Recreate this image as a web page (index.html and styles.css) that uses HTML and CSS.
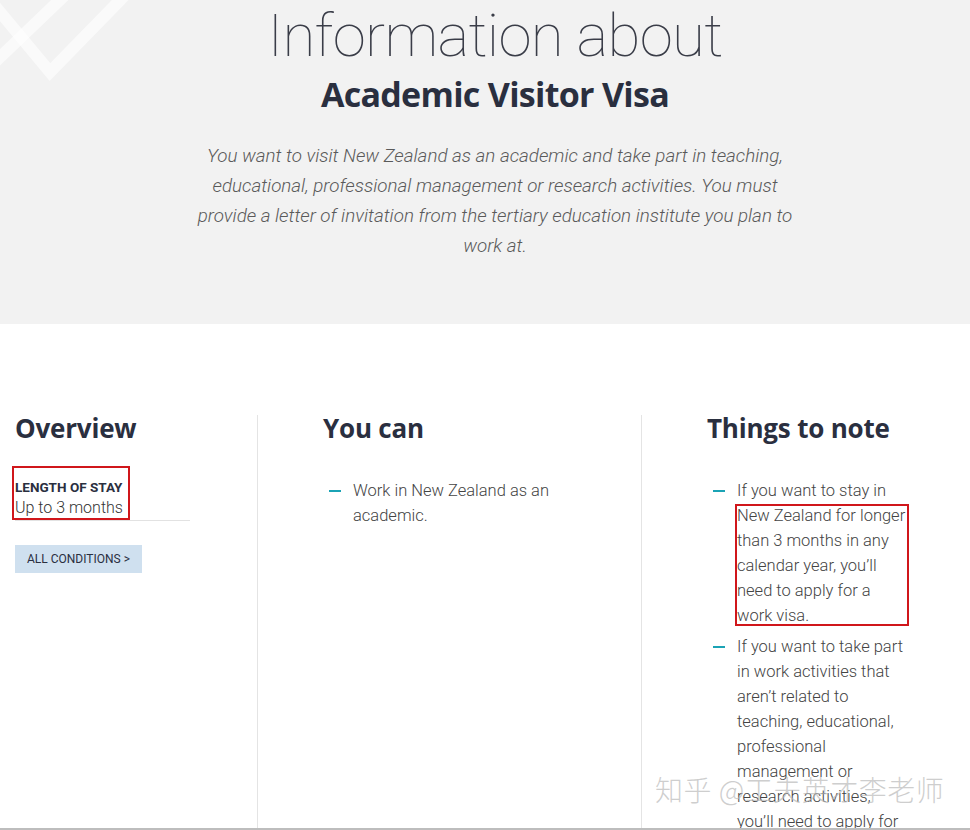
FILE: index.html
```html
<!DOCTYPE html>
<html>
<head>
    <title>Academic Visitor Visa</title>
    <link rel="stylesheet" href="styles.css">
</head>
<body>
<div class="page">
    <header class="hero">
        <svg class="hero-deco" width="200" height="110" viewBox="0 0 200 110">
            <polyline points="-10,0 50,72 130,-10" fill="none" stroke="#ffffff" stroke-opacity="0.6" stroke-width="12"/>
            <line x1="65" y1="-5" x2="-5" y2="62" stroke="#ffffff" stroke-opacity="0.6" stroke-width="12"/>
        </svg>
        <h1 class="hero-title">Information about</h1>
        <h2 class="hero-sub">Academic Visitor Visa</h2>
        <p class="hero-intro">You want to visit New Zealand as an academic and take part in teaching, educational, professional management or research activities. You must provide a letter of invitation from the tertiary education institute you plan to work at.</p>
    </header>

    <section class="summary">
        <div class="col col-overview">
            <h3 class="col-title">Overview</h3>
            <div class="stay">
                <div class="stay-box">
                    <span class="stay-label">Length of stay</span>
                    <span class="stay-value">Up to 3 months</span>
                </div>
            </div>
            <a class="btn-conditions" href="#">All conditions &gt;</a>
        </div>

        <div class="col col-can">
            <h3 class="col-title">You can</h3>
            <ul class="dash-list list-can">
                <li>Work in New Zealand as an academic.</li>
            </ul>
        </div>

        <div class="col col-note">
            <h3 class="col-title">Things to note</h3>
            <ul class="dash-list list-note">
                <li class="marked">If you want to stay in New Zealand for longer than 3 months in any calendar year, you’ll need to apply for a work visa.<span class="mark-box"></span></li>
                <li>If you want to take part in work activities that aren’t related to teaching, educational, professional management or research activities, you’ll need to apply for a work visa.</li>
            </ul>
        </div>
    </section>

    <div class="watermark">知乎 @工夫英才李老师</div>
</div>
</body>
</html>
```

FILE: styles.css
```css
html, body { margin: 0; padding: 0; background: #fff; }
body { font-family: Roboto, "Liberation Sans", sans-serif; color: #444; }

.page { position: relative; height: 828px; overflow: hidden; border-bottom: 2px solid #bdbdbd; }

/* header band */
.hero { position: relative; background: #f2f2f2; height: 324px; padding-left: 20px; text-align: center; overflow: hidden; }
.hero-deco { position: absolute; left: 0; top: 0; }
.hero-title { margin: 0; font-size: 60px; font-weight: 100; line-height: 72px; color: #3a3d48; letter-spacing: -0.7px; }
.hero-sub { margin: 0; font-family: "Open Sans", sans-serif; font-size: 34px; font-weight: 700; line-height: 44px; color: #2a2f3f; letter-spacing: -0.7px; }
.hero-intro { width: 618px; margin: 25px auto 0; font-size: 18.8px; font-weight: 300; font-style: italic; line-height: 30px; color: #5a5a5a; }

/* three columns */
.summary { display: grid; grid-template-columns: 257px 384px 1fr; margin-top: 91px; }
.col { min-height: 420px; }
.col-overview { padding-left: 15px; }
.col-can, .col-note { border-left: 1px solid #e4e4e4; padding-left: 65px; }
.col-title { margin: -2px 0 0; font-family: "Open Sans", sans-serif; font-size: 26px; font-weight: 700; line-height: 30px; color: #2a2f3f; letter-spacing: -0.2px; }

.stay { width: 175px; margin-top: 23px; border-bottom: 1px solid #e2e2e2; }
.stay-box { display: inline-flex; flex-direction: column; margin-left: -3px; padding: 10px 5px 0 1px; border: 2px solid #d0161b; }
.stay-label { font-size: 13.5px; font-weight: 700; text-transform: uppercase; color: #2a2f3f; line-height: 19px; }
.stay-value { font-size: 16px; font-weight: 300; color: #333; line-height: 21px; }

.btn-conditions { display: inline-block; margin-top: 24px; padding: 6px 12px; background: #cfe0ef; color: #2a2f3f; font-size: 12px; text-transform: uppercase; text-decoration: none; line-height: 16px; }

.dash-list { list-style: none; margin: 35px 0 0; padding: 0; }
.dash-list li { position: relative; padding-left: 30px; font-size: 16.5px; font-weight: 300; line-height: 25px; color: #444; margin-bottom: 6px; }
.dash-list li::before { content: ""; position: absolute; left: 6px; top: 12px; width: 12px; height: 2px; background: #1ba3b5; }
.list-can li { width: 215px; }
.list-note li { width: 171px; }

.mark-box { position: absolute; left: 28px; top: 26px; width: 170px; height: 118px; border: 2px solid #d0161b; }

.watermark { position: absolute; left: 655px; top: 771px; white-space: nowrap; font-family: "Noto Sans CJK SC", sans-serif; font-size: 28px; font-weight: 300; line-height: 36px; color: rgba(185, 185, 185, 0.7); letter-spacing: 0.5px; }
```
